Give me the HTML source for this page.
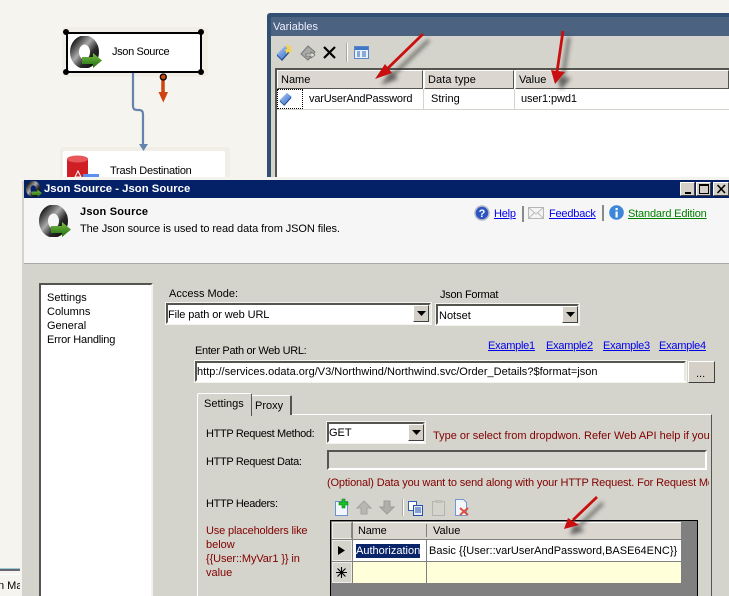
<!DOCTYPE html>
<html><head><meta charset="utf-8">
<style>
html,body{margin:0;padding:0;overflow:hidden;width:729px;height:596px}
body{background:#f5f4ee;font-family:"Liberation Sans",sans-serif;font-size:11px;color:#000}
#w{position:relative;width:729px;height:596px;overflow:hidden}
.b{position:absolute;box-sizing:border-box}
.t{position:absolute;white-space:nowrap;line-height:14px;height:14px;margin-top:1px}
.a{color:#0000ee;text-decoration:underline}
.r{color:#800000}
.in{position:absolute;box-sizing:border-box;background:#fff;border:2px solid;border-color:#55554f #e8e7e1 #fff #55554f;outline:1px solid #f4f3ee}
.btn{position:absolute;box-sizing:border-box;background:#d4d0c8;border:1px solid;border-color:#fff #404040 #404040 #fff}
.hd{position:absolute;box-sizing:border-box;background:#dbd7d0;border:1px solid;border-color:#fff #55554f #55554f #fff}
svg{position:absolute;overflow:visible}
</style></head><body><div id="w">
<svg width="0" height="0" style="position:absolute"><defs>
<linearGradient id="ring" x1="0" y1="0" x2="1" y2="1"><stop offset="0" stop-color="#1a1a1a"/><stop offset=".4" stop-color="#aaa"/><stop offset=".7" stop-color="#2a2a2a"/><stop offset="1" stop-color="#111"/></linearGradient>
<linearGradient id="gr" x1="0" y1="0" x2="0" y2="1"><stop offset="0" stop-color="#7ac143"/><stop offset="1" stop-color="#1f6b12"/></linearGradient>
<linearGradient id="bl" x1="0" y1="0" x2="1" y2="1"><stop offset="0" stop-color="#b5d3f8"/><stop offset="1" stop-color="#2f66c4"/></linearGradient>
<symbol id="json" viewBox="0 0 32 32"><ellipse cx="14.500" cy="16" rx="10" ry="12" fill="none" stroke="url(#ring)" stroke-width="9"/><path d="M12 21h11v-4l9 7.500-9 7.500v-4H12z" fill="url(#gr)"/></symbol>
<symbol id="gem" viewBox="0 0 16 16"><path d="M1 9 9 1l5 4-8 9z" fill="url(#bl)"/><path d="M1 9l5 5v2L1 11z" fill="#2f5ea8"/><path d="M6 14l8-9v2l-8 9z" fill="#1f4a96"/></symbol>
<filter id="sh" x="-30%" y="-30%" width="170%" height="170%"><feGaussianBlur stdDeviation="2.2"/></filter>
</defs></svg>

<!-- canvas nodes -->
<div class="b" style="left:62px;top:27px;width:146px;height:50px;background:#f0eee6;border-radius:4px"></div>
<div class="b" style="left:66px;top:32px;width:136px;height:41px;background:#fff;border:2px solid #000;border-radius:2px"></div>
<div class="b" style="left:60px;top:147px;width:170px;height:32px;background:#f0eee6;border-radius:4px"></div>
<div class="b" style="left:63px;top:151px;width:162px;height:30px;background:#fff;border-radius:2px"></div>
<svg style="left:0;top:0" width="270" height="180">
<circle cx="66" cy="32" r="3" fill="#000"/><circle cx="201" cy="32" r="3" fill="#000"/><circle cx="66" cy="72" r="3" fill="#000"/><circle cx="201" cy="72" r="3" fill="#000"/>
<path d="M133 73v33q0 4 4 4h2q4 0 4 4v31" fill="none" stroke="#6683ad" stroke-width="2.2"/>
<path d="M139 144h9l-4.500 7z" fill="#6683ad"/>
<path d="M163 80v14" stroke="#cf4310" stroke-width="3.500"/>
<path d="M158.500 92h9.500l-4.700 10.500z" fill="#cf4310"/>
<circle cx="163.300" cy="77" r="3" fill="#cf4310" stroke="#000" stroke-width="1.300"/>
</svg>
<svg style="left:70px;top:36px" width="33" height="32"><use href="#json" width="32" height="32"/></svg>
<div class="t" style="left:112px;top:44px;letter-spacing:-.35px">Json Source</div>
<svg style="left:67px;top:155px" width="34" height="24"><path d="M0 4v20h21V4z" fill="#cf1f25"/><ellipse cx="10.500" cy="4" rx="10.500" ry="3.500" fill="#e9565a"/><path d="M8 22l3-6 3 6z" fill="none" stroke="#fff"/><rect x="16" y="19" width="16" height="5" fill="#5b8ff0"/></svg>
<div class="t" style="left:110px;top:163px;letter-spacing:-.25px">Trash Destination</div>

<!-- Variables window -->
<div class="b" style="left:267px;top:13px;width:470px;height:170px;background:#324f74;border-radius:3px 0 0 0"></div>
<div class="b" style="left:271px;top:17px;width:458px;height:19px;background:#4b6280"></div>
<div class="t" style="left:273px;top:19px;color:#eef;font-size:11px">Variables</div>
<div class="b" style="left:271px;top:36px;width:458px;height:144px;background:#d5d4cc"></div>
<svg style="left:276px;top:44px" width="17" height="17"><use href="#gem" width="16" height="16" y="1"/><path d="M12 0l1 3 3-1-2 3 3 1-3 1 1 3-3-2-2 2V7L8 6l3-1-1-3z" fill="#f6d34a"/></svg>
<svg style="left:300px;top:45px" width="17" height="16"><path d="M1 9l7-8 7 6-7 8z" fill="#a8a8a4" stroke="#777"/><path d="M6 9h5V7l4 3-4 3v-2H6z" fill="#e4e4e0" stroke="#666" stroke-width=".7"/></svg>
<svg style="left:323px;top:46px" width="14" height="13"><path d="M1 1l11 11M12 1 1 12" stroke="#000" stroke-width="2.200"/></svg>
<div class="b" style="left:346px;top:43px;width:2px;height:19px;background:#a9a8a2;border-right:1px solid #fff"></div>
<svg style="left:354px;top:46px" width="15" height="13"><rect x=".5" y=".5" width="14" height="12" fill="#e8f0fb" stroke="#5a85c6"/><rect x="1" y="1" width="13" height="3" fill="#3f77c8"/><path d="M3 6h3M8 6h4M3 8h3M8 8h4M3 10h3M8 10h4" stroke="#2f5fb0"/></svg>
<div class="b" style="left:275px;top:68px;width:454px;height:112px;background:#fff;border-left:2px solid #55554f;border-top:2px solid #55554f"></div>
<div class="hd" style="left:277px;top:70px;width:146px;height:19px"></div>
<div class="hd" style="left:424px;top:70px;width:90px;height:19px"></div>
<div class="hd" style="left:515px;top:70px;width:214px;height:19px"></div>
<div class="t" style="left:281px;top:72px">Name</div>
<div class="t" style="left:428px;top:72px;letter-spacing:.1px">Data type</div>
<div class="t" style="left:519px;top:72px">Value</div>
<div class="b" style="left:277px;top:109px;width:452px;height:1px;background:#d4d3cc"></div>
<div class="b" style="left:423px;top:89px;width:1px;height:20px;background:#d4d3cc"></div>
<div class="b" style="left:514px;top:89px;width:1px;height:20px;background:#d4d3cc"></div>
<div class="b" style="left:277px;top:89px;width:26px;height:20px;border:1px dotted #000"></div>
<svg style="left:279px;top:92px" width="15" height="15"><use href="#gem" width="14" height="14"/></svg>
<div class="t" style="left:309px;top:91px;letter-spacing:-.17px">varUserAndPassword</div>
<div class="t" style="left:431px;top:91px">String</div>
<div class="t" style="left:521px;top:91px;letter-spacing:-.1px">user1:pwd1</div>

<!-- Dialog -->
<div class="b" style="left:20px;top:177px;width:720px;height:430px;background:#d5d4cc;border:0 solid #f4f3ee;border-width:3px 0 0 2px;box-shadow:inset 0 1px 0 #f4f3ee"></div>
<div class="b" style="left:24px;top:180px;width:705px;height:18px;background:#042066"></div>
<svg style="left:26px;top:181px" width="16" height="16"><use href="#json" width="16" height="16"/></svg>
<div class="t" style="left:44px;top:181px;color:#fff;font-weight:bold;font-size:11.350px">Json Source - Json Source</div>
<div class="btn" style="left:680px;top:182px;width:15px;height:14px"><div class="b" style="left:4px;top:9px;width:6px;height:2px;background:#000"></div></div>
<div class="btn" style="left:696px;top:182px;width:15px;height:14px"><div class="b" style="left:2px;top:1px;width:10px;height:10px;border:1px solid #000;border-top-width:2px"></div></div>
<div class="btn" style="left:713px;top:182px;width:16px;height:14px"><svg style="left:3px;top:2px" width="9" height="8"><path d="M.5 0l7.500 8M8 0 .5 8" stroke="#000" stroke-width="1.600"/></svg></div>

<div class="b" style="left:24px;top:198px;width:705px;height:66px;background:#f6f6f6;border-bottom:1px solid #a8a8a6"></div>
<svg style="left:39px;top:205px" width="33" height="33"><use href="#json" width="32" height="32"/></svg>
<div class="t" style="left:80px;top:204px;font-weight:bold;letter-spacing:.2px">Json Source</div>
<div class="t" style="left:80px;top:221px;letter-spacing:-.08px">The Json source is used to read data from JSON files.</div>
<svg style="left:474px;top:205px" width="17" height="16"><circle cx="8" cy="8" r="7" fill="#2b55c0" stroke="#b8b8c8" stroke-width="1.500"/><text x="8" y="12" font-size="11" font-weight="bold" fill="#fff" text-anchor="middle" font-family="Liberation Sans">?</text></svg>
<div class="t a" style="left:494px;top:206px;letter-spacing:-.2px">Help</div>
<div class="b" style="left:522px;top:206px;width:2px;height:16px;background:#8a8a88"></div>
<svg style="left:528px;top:207px" width="16" height="13"><rect x=".5" y=".5" width="15" height="11" fill="#f4f4f4" stroke="#b4b4b4"/><path d="M1 1l7 6 7-6M1 11l5-5M15 11l-5-5" fill="none" stroke="#bbb"/></svg>
<div class="t a" style="left:549px;top:206px;letter-spacing:-.2px">Feedback</div>
<div class="b" style="left:602px;top:205px;width:2px;height:16px;background:#8a8a88"></div>
<svg style="left:609px;top:205px" width="16" height="16"><circle cx="7.500" cy="7.500" r="7.300" fill="#3d86d8"/><rect x="6.500" y="6.500" width="2.200" height="6" fill="#fff"/><rect x="6.500" y="3" width="2.200" height="2.200" fill="#fff"/></svg>
<div class="t a" style="left:628px;top:206px;color:#008000;letter-spacing:-.17px">Standard Edition</div>

<!-- list -->
<div class="b" style="left:39px;top:283px;width:114px;height:330px;background:#fff;border:2px solid;border-color:#55554f #f4f3ee #f4f3ee #55554f"></div>
<div class="t" style="left:47px;top:290px">Settings</div>
<div class="t" style="left:47px;top:304px">Columns</div>
<div class="t" style="left:47px;top:318px">General</div>
<div class="t" style="left:47px;top:332px;letter-spacing:-.2px">Error Handling</div>

<div class="t" style="left:169px;top:286px">Access Mode:</div>
<div class="t" style="left:440px;top:287px;letter-spacing:-.27px">Json Format</div>
<div class="in" style="left:166px;top:303px;width:265px;height:21px"></div>
<div class="t" style="left:168px;top:307px;letter-spacing:-.1px">File path or web URL</div>
<div class="btn" style="left:413px;top:305px;width:16px;height:17px"><svg style="left:3px;top:5px" width="9" height="5"><path d="M0 0h9L4.500 5z" fill="#000"/></svg></div>
<div class="in" style="left:436px;top:304px;width:143px;height:21px"></div>
<div class="t" style="left:439px;top:308px">Notset</div>
<div class="btn" style="left:562px;top:306px;width:16px;height:17px"><svg style="left:3px;top:5px" width="9" height="5"><path d="M0 0h9L4.500 5z" fill="#000"/></svg></div>

<div class="t" style="left:195px;top:343px;letter-spacing:-.32px">Enter Path or Web URL:</div>
<div class="t a" style="left:488px;top:338px;letter-spacing:-.25px">Example1</div>
<div class="t a" style="left:546px;top:338px;letter-spacing:-.25px">Example2</div>
<div class="t a" style="left:603px;top:338px;letter-spacing:-.25px">Example3</div>
<div class="t a" style="left:659px;top:338px;letter-spacing:-.25px">Example4</div>
<div class="in" style="left:195px;top:361px;width:491px;height:21px"></div>
<div class="t" style="left:197px;top:364px;letter-spacing:.012px">http://services.odata.org/V3/Northwind/Northwind.svc/Order_Details?$format=json</div>
<div class="btn" style="left:688px;top:361px;width:27px;height:22px"></div>
<div class="t" style="left:696px;top:366px">...</div>

<!-- tabs -->
<div class="b" style="left:197px;top:414px;width:515px;height:200px;border:1px solid;border-color:#fff #55554f #55554f #fff;background:#d5d4cc"></div>
<div class="b" style="left:251px;top:395px;width:41px;height:20px;background:#d5d4cc;border:1px solid;border-color:#fff #55554f #d5d4cc #fff;border-bottom:0;border-right-width:2px;border-radius:2px 2px 0 0"></div>
<div class="b" style="left:197px;top:393px;width:55px;height:23px;background:#d5d4cc;border:1px solid;border-color:#fff #55554f #d5d4cc #fff;border-bottom:0;border-radius:2px 2px 0 0"></div>
<div class="t" style="left:204px;top:396px">Settings</div>
<div class="t" style="left:255px;top:398px">Proxy</div>

<div class="t" style="left:206px;top:426px;letter-spacing:-.35px">HTTP Request Method:</div>
<div class="in" style="left:327px;top:422px;width:98px;height:21px"></div>
<div class="t" style="left:329px;top:425px">GET</div>
<div class="btn" style="left:408px;top:424px;width:16px;height:17px"><svg style="left:3px;top:5px" width="9" height="5"><path d="M0 0h9L4.500 5z" fill="#000"/></svg></div>
<div class="t r" style="left:433px;top:428px;width:276px;overflow:hidden">Type or select from dropdwon. Refer Web API help if you</div>
<div class="t" style="left:206px;top:454px;letter-spacing:-.35px">HTTP Request Data:</div>
<div class="b" style="left:327px;top:450px;width:380px;height:20px;background:#d5d4cc;border:2px solid;border-color:#55554f #fff #fff #55554f"></div>
<div class="t r" style="left:327px;top:475px;width:382px;overflow:hidden;letter-spacing:-.15px">(Optional) Data you want to send along with your HTTP Request. For Request Method</div>
<div class="t" style="left:206px;top:496px;letter-spacing:-.35px">HTTP Headers:</div>
<div class="t r" style="left:206px;top:523px;letter-spacing:-.15px">Use placeholders like</div>
<div class="t r" style="left:206px;top:537px">below</div>
<div class="t r" style="left:206px;top:551px;letter-spacing:-.1px">{{User::MyVar1 }} in</div>
<div class="t r" style="left:206px;top:565px">value</div>

<!-- grid toolbar -->
<svg style="left:335px;top:499px" width="135" height="18">
<rect x="0.500" y="2.500" width="12" height="14" fill="#f2f6fd" stroke="#6d93cf"/><path d="M6 0h3v3h3v3H9v3H6V6H3V3h3z" fill="#17c025" stroke="#0a7d14" stroke-width=".6" transform="translate(1 0)"/>
<path d="M29 2l7 7h-4v6h-6V9h-4z" fill="#b8b8b2" stroke="#a4a49e"/>
<path d="M49 2h6v6h4l-7 7-7-7h4z" fill="#b0b0aa" stroke="#9c9c96"/>
<path d="M67.500 0v17" stroke="#aaa9a3"/><path d="M68.500 0v17" stroke="#fff"/>
<rect x="73.500" y="2.500" width="8" height="9" fill="#fff" stroke="#3460b0"/><rect x="78.500" y="6.500" width="9" height="10" fill="#e4edfb" stroke="#2450a4"/><path d="M80 9h6M80 11h6M80 13h6" stroke="#2450a4"/>
<rect x="97.500" y="2.500" width="12" height="14" fill="#d4d3cc" stroke="#b4b3ad"/><rect x="100" y="1" width="7" height="3" fill="#c0bfb8"/>
<path d="M120.500 .5h8l3 3v13h-11z" fill="#f3f7fd" stroke="#7298d3"/><path d="M125 9l8 7M133 9l-8 7" stroke="#d9503f" stroke-width="2"/>
</svg>

<!-- grid -->
<div class="b" style="left:330px;top:520px;width:368px;height:90px;background:#808080;border:1px solid #000"></div>
<div class="b" style="left:332px;top:522px;width:20px;height:17px;background:#d5d4cc;border:1px solid #eeede8;border-right-color:#888"></div>
<div class="b" style="left:353px;top:522px;width:328px;height:17px;background:#dbd7d0;border-top:1px solid #fff"></div>
<div class="b" style="left:426px;top:524px;width:1px;height:13px;background:#808080"></div>
<div class="t" style="left:358px;top:523px;letter-spacing:-.2px">Name</div>
<div class="t" style="left:433px;top:523px">Value</div>
<div class="b" style="left:332px;top:540px;width:20px;height:21px;background:#d5d4cc;border:1px solid #eeede8"></div>
<div class="b" style="left:332px;top:562px;width:20px;height:21px;background:#d5d4cc;border:1px solid #eeede8"></div>
<svg style="left:337px;top:545px" width="10" height="11"><path d="M1 1l7 4.500-7 4.500z" fill="#000"/></svg>
<svg style="left:336px;top:567px" width="11" height="11"><path d="M5.500 0v11M0 5.500h11M1.500 1.500l8 8M9.500 1.500l-8 8" stroke="#000" stroke-width="1.100"/></svg>
<div class="b" style="left:353px;top:540px;width:73px;height:21px;background:#fff"></div>
<div class="b" style="left:427px;top:540px;width:254px;height:21px;background:#fff"></div>
<div class="b" style="left:353px;top:562px;width:73px;height:21px;background:#ffffd9"></div>
<div class="b" style="left:427px;top:562px;width:254px;height:21px;background:#ffffd9"></div>
<div class="b" style="left:356px;top:544px;width:64px;height:14px;background:#0a246a"></div>
<div class="t" style="left:356px;top:543px;color:#fff">Authorization</div>
<div class="t" style="left:429px;top:543px">Basic {{User::varUserAndPassword,BASE64ENC}}</div>

<!-- bottom-left -->
<div class="b" style="left:0;top:568px;width:20px;height:3px;background:#667;border-top:1px solid #9cc"></div>
<div class="b" style="left:0;top:574px;width:20px;height:1px;background:#fff"></div>
<div class="b" style="left:0;top:578px;width:20px;height:16px;overflow:hidden"><div class="t" style="left:-2px;top:0">n Ma</div></div>

<!-- red arrows -->
<svg style="left:0;top:0" width="729" height="596">
<g filter="url(#sh)" opacity=".7" transform="translate(6 6)" fill="#333" stroke="#333">
<path d="M423 34 386 70" stroke-width="3"/><path d="M375 79l10-15 7 9z" stroke="none"/>
<path d="M563 31 557 70" stroke-width="3"/><path d="M555 84l-4-14 14 2z" stroke="none"/>
<path d="M597 497 573 520" stroke-width="3"/><path d="M564 529l4-11 11 7z" stroke="none"/>
</g>
<g fill="#c90f0f" stroke="#c90f0f">
<path d="M423 34 386 70" stroke-width="2.800"/><path d="M375 79l10-15 7 9z" stroke="none"/>
<path d="M563 31 557 72" stroke-width="2.800"/><path d="M555 84l-4-14 14 2z" stroke="none"/>
<path d="M597 497 573 520" stroke-width="2.800"/><path d="M564 529l4-11 11 7z" stroke="none"/>
</g>
</svg>
</div></body></html>
